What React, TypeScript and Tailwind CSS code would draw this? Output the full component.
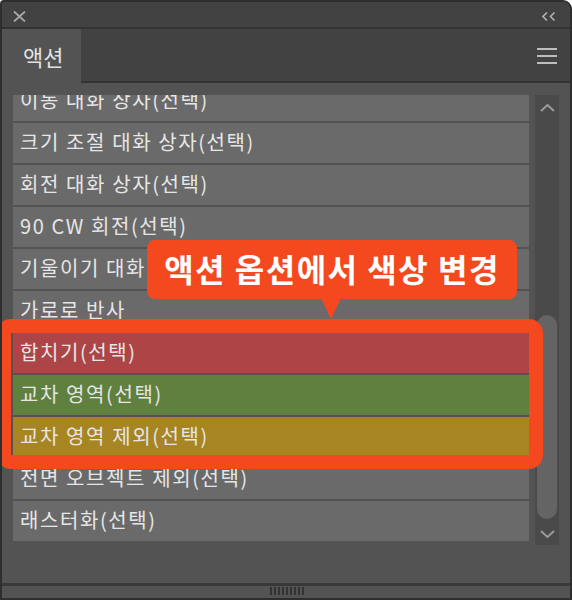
const font = { fontFamily: '"Noto Sans CJK KR", "Noto Sans", sans-serif' }

const rows: { label: string; tone?: string }[] = [
  { label: '이동 대화 상자(선택)' },
  { label: '크기 조절 대화 상자(선택)' },
  { label: '회전 대화 상자(선택)' },
  { label: '90 CW 회전(선택)' },
  { label: '기울이기 대화 상자(선택)' },
  { label: '가로로 반사' },
  { label: '합치기(선택)', tone: 'bg-[#ad4546]' },
  { label: '교차 영역(선택)', tone: 'bg-[#5f803e]' },
  { label: '교차 영역 제외(선택)', tone: 'bg-[#a78522]' },
  { label: '전면 오브젝트 제외(선택)' },
  { label: '래스터화(선택)' },
]

function Chevron({ down }: { down?: boolean }) {
  return (
    <svg width="15" height="8" viewBox="0 0 15 8" className="block">
      <polyline
        points={down ? '1,1 7.5,7 14,1' : '1,7 7.5,1 14,7'}
        fill="none"
        stroke="#9a9a9a"
        strokeWidth="2"
      />
    </svg>
  )
}

export default function App() {
  return (
    <div className="w-[572px] h-[600px] bg-white" style={font}>
      <div className="relative w-full h-full flex flex-col border-2 border-[#2e2e2e] rounded-tl-[4px] rounded-tr-[9px] overflow-hidden bg-[#535353]">
        {/* title bar */}
        <div className="h-[27px] shrink-0 flex items-center justify-between pt-[3px] pl-[11px] pr-[14px] bg-[#424242] border-b-2 border-[#333333]">
          <svg width="13" height="11" viewBox="0 0 13 11">
            <path d="M1 0.5 L12 10.5 M12 0.5 L1 10.5" stroke="#a8a8a8" strokeWidth="1.8" />
          </svg>
          <svg width="14" height="9" viewBox="0 0 14 9">
            <path d="M5 0.5 L1 4.5 L5 8.5 M12.5 0.5 L8.5 4.5 L12.5 8.5" fill="none" stroke="#b0b0b0" strokeWidth="1.6" />
          </svg>
        </div>

        {/* tab row */}
        <div className="h-[54px] shrink-0 flex bg-[#424242]">
          <div className="w-[79px] bg-[#535353] flex items-center pl-[21px] pb-[1px]">
            <span className="text-[22px] text-[#e2e2e2] leading-none">액션</span>
          </div>
          <div className="flex-1 flex items-center justify-end pr-[13px] border-b-2 border-[#333333]">
            <div className="flex flex-col gap-[5px] pt-[2px]">
              <span className="block w-[20px] h-[2px] bg-[#bdbdbd]" />
              <span className="block w-[20px] h-[2px] bg-[#bdbdbd]" />
              <span className="block w-[20px] h-[2px] bg-[#bdbdbd]" />
            </div>
          </div>
        </div>

        {/* list area */}
        <div className="flex-1 flex gap-[6px] pt-[12px] pl-[11px] pr-[11px] pb-[38px]">
          <div className="flex-1 overflow-hidden">
            <div className="-mt-[14px] flex flex-col gap-[2px]">
              {rows.map((r) => (
                <div
                  key={r.label}
                  className={`h-[40px] shrink-0 flex items-center pl-[7px] pb-[2px] text-[20px] tracking-[1.6px] text-[#e6e6e6] whitespace-nowrap ${r.tone ?? 'bg-[#6a6a6a]'}`}
                >
                  {r.label}
                </div>
              ))}
            </div>
          </div>
          <div className="w-[24px] bg-[#4a4a4a] flex flex-col items-center">
            <div className="h-[24px] w-full flex items-center justify-center pt-[2px]">
              <Chevron />
            </div>
            <div className="flex-1 w-full px-[2px]">
              <div className="mt-[196px] h-[204px] rounded-full bg-[#646464]" />
            </div>
            <div className="h-[24px] w-full flex items-center justify-center pt-[1px]">
              <Chevron down />
            </div>
          </div>
        </div>

        {/* bottom grip */}
        <div className="h-[3px] shrink-0 bg-[#383838]" />
        <div className="h-[12px] shrink-0 flex justify-center pt-[1px] pl-[2px]">
          <div className="flex gap-[2px] h-[8px]">
            {Array.from({ length: 9 }).map((_, i) => (
              <span key={i} className="block w-[2px] h-full bg-[#333333]" />
            ))}
          </div>
        </div>

        {/* highlight frame */}
        <div className="absolute left-[-5px] top-[317px] w-[546px] h-[150px] border-[14px] border-[#f4491f] rounded-[14px] pointer-events-none" />

        {/* callout */}
        <div className="absolute left-[145px] top-[238px] w-[370px] h-[59px] rounded-[8px] bg-[#f4491f] flex items-center justify-center">
          <span className="text-[32px] font-bold text-white leading-none tracking-[1.5px] pb-[3px] whitespace-nowrap">액션 옵션에서 색상 변경</span>
          <svg width="20" height="21" viewBox="0 0 20 21" className="absolute left-[174px] top-[58px]">
            <polygon points="0,0 20,0 10,21" fill="#f4491f" />
          </svg>
        </div>
      </div>
    </div>
  )
}
